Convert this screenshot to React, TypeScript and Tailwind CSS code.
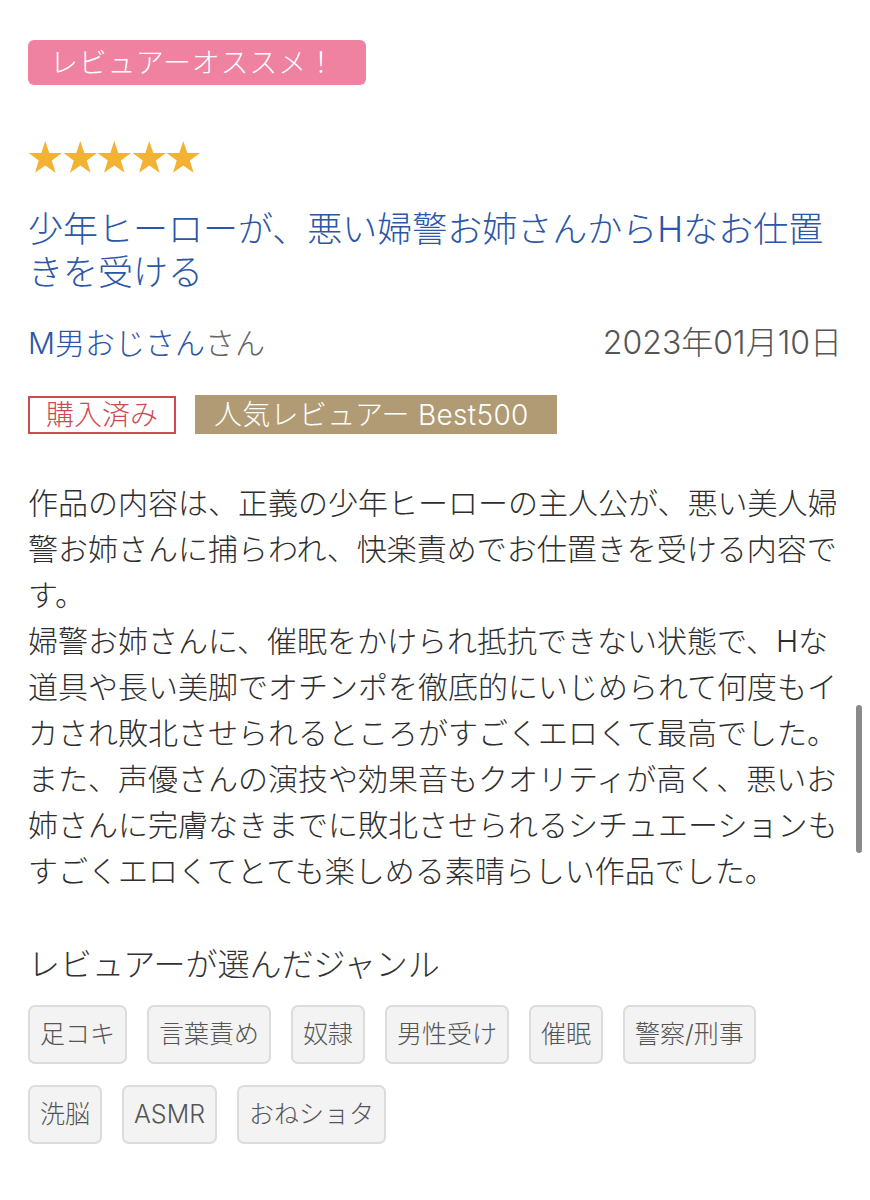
import React from "react";

const FONT = '"Inter", "Noto Sans CJK JP", "Noto Sans", sans-serif';

function Star() {
  return (
    <svg width="34.6" height="32" viewBox="0 0 24 23" aria-hidden="true">
      <path
        d="M12 0L14.9 8.6L24 8.7L16.7 14.1L19.4 22.8L12 17.6L4.6 22.8L7.3 14.1L0 8.7L9.1 8.6Z"
        fill="#F4B233"
      />
    </svg>
  );
}

const GENRES_1 = ["足コキ", "言葉責め", "奴隷", "男性受け", "催眠", "警察/刑事"];
const GENRES_2 = ["洗脳", "ASMR", "おねショタ"];

function Tag({ label }: { label: string }) {
  return (
    <span className="inline-flex h-[59px] items-center rounded-[7px] border-2 border-[#dcdcdc] bg-[#f3f3f3] px-[10px] text-[25px] leading-none font-light text-[#555]">
      {label}
    </span>
  );
}

export default function App() {
  return (
    <div className="relative min-h-[1200px] w-[870px] bg-white" style={{ fontFamily: FONT }}>
      <div className="px-[28px] pt-[40px]">
        <div className="inline-flex h-[45px] w-[338px] items-center rounded-[6px] bg-[#ef81a1] pl-[22px] text-[28px] leading-none font-light tracking-[0.8px] text-white">
          レビュアーオススメ！
        </div>

        <div className="mt-[56px] flex h-[32px]">
          <Star />
          <Star />
          <Star />
          <Star />
          <Star />
        </div>

        <h1 className="mt-[35px] text-[35px] leading-[43px] font-light text-[#2c56a7]">
          少年ヒーローが、悪い婦警お姉さんからHなお仕置きを受ける
        </h1>

        <div className="mt-[29px] flex items-center justify-between leading-[40px] font-light">
          <span className="text-[30px]">
            <span className="text-[#2c56a7]">M男おじさん</span>
            <span className="text-[#666]">さん</span>
          </span>
          <span className="text-[32px] text-[#555]">2023年01月10日</span>
        </div>

        <div className="mt-[32px] flex items-center gap-[19px]">
          <span className="inline-flex h-[38px] items-center border-2 border-[#cf4a50] px-[16px] text-[28px] leading-none font-light text-[#cf4a50]">
            購入済み
          </span>
          <span className="inline-flex h-[39px] items-center bg-[#b19b74] pl-[19px] pr-[28px] text-[28px] leading-none font-light tracking-[0.3px] text-white">
            人気レビュアー Best500
          </span>
        </div>

        <p className="mt-[46px] text-[30px] leading-[46px] font-light text-[#2e2e2e]">
          作品の内容は、正義の少年ヒーローの主人公が、悪い美人婦警お姉さんに捕らわれ、快楽責めでお仕置きを受ける内容です。
          <br />
          婦警お姉さんに、催眠をかけられ抵抗できない状態で、Hな道具や長い美脚でオチンポを徹底的にいじめられて何度もイカされ敗北させられるところがすごくエロくて最高でした。
          <br />
          また、声優さんの演技や効果音もクオリティが高く、悪いお姉さんに完膚なきまでに敗北させられるシチュエーションもすごくエロくてとても楽しめる素晴らしい作品でした。
        </p>

        <h2 className="mt-[49px] text-[32px] leading-[44px] font-light text-[#333]">
          レビュアーが選んだジャンル
        </h2>

        <div className="mt-[18px] flex flex-wrap gap-x-[20px]">
          {GENRES_1.map((g) => (
            <Tag key={g} label={g} />
          ))}
        </div>
        <div className="mt-[21px] flex flex-wrap gap-x-[20px]">
          {GENRES_2.map((g) => (
            <Tag key={g} label={g} />
          ))}
        </div>
      </div>

      {/* overlay scroll indicator */}
      <div className="absolute left-[856px] top-[705px] h-[148px] w-[6px] rounded-full bg-[#8a8a8a]" />
    </div>
  );
}
